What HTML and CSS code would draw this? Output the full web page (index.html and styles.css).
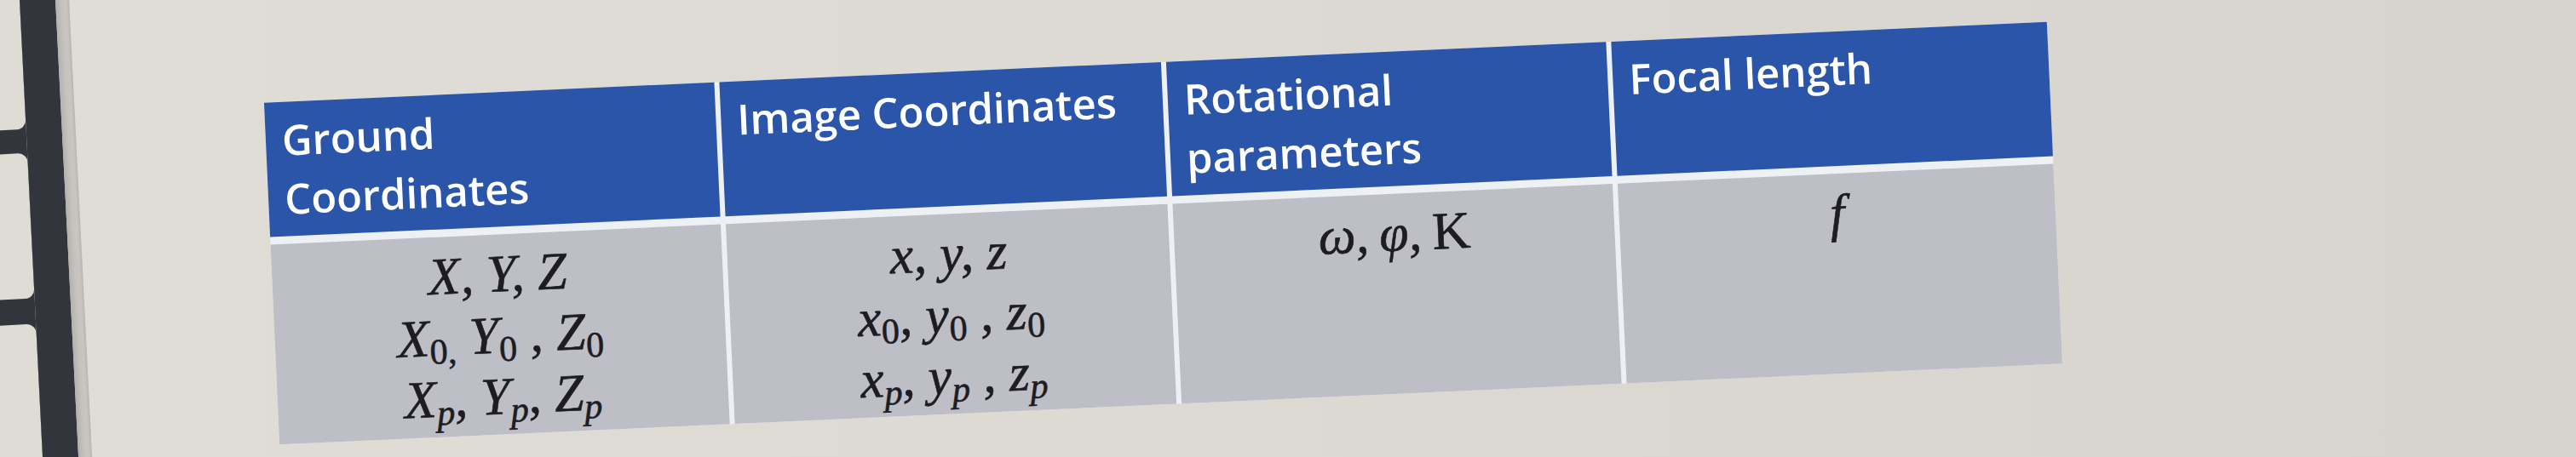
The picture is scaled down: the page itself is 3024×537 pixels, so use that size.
FILE: index.html
```html
<!DOCTYPE html>
<html lang="en">
<head>
<meta charset="utf-8">
<title>Photogrammetry parameters</title>
<link rel="stylesheet" href="styles.css">
</head>
<body>
  <div class="edge">
    <div class="bezel">
      <div class="bezel-panels">
        <div class="panel panel-top"></div>
        <div class="panel panel-mid"></div>
        <div class="panel panel-bottom"></div>
      </div>
      <div class="bezel-bar"></div>
      <div class="bezel-lip"></div>
    </div>
  </div>

  <div class="table">
    <div class="th">Ground<br>Coordinates</div>
    <div class="th">Image Coordinates</div>
    <div class="th">Rotational<br>parameters</div>
    <div class="th">Focal length</div>

    <div class="td">
      <div class="ln">X, Y, Z</div>
      <div class="ln">X<sub class="up">0,</sub> Y<sub class="up">0</sub> , Z<sub class="up">0</sub></div>
      <div class="ln">X<sub>p</sub>, Y<sub>p</sub>, Z<sub>p</sub></div>
    </div>
    <div class="td">
      <div class="ln">x, y, z</div>
      <div class="ln">x<sub class="up">0</sub>, y<sub class="up">0</sub> , z<sub class="up">0</sub></div>
      <div class="ln">x<sub>p</sub>, y<sub>p</sub> , z<sub>p</sub></div>
    </div>
    <div class="td">
      <div class="ln">ω,&thinsp;φ,&thinsp;<span class="up">K</span></div>
    </div>
    <div class="td">
      <div class="ln">f</div>
    </div>
  </div>
</body>
</html>
```

FILE: styles.css
```css
html, body {
  margin: 0;
  padding: 0;
}

body {
  width: 3024px;
  height: 537px;
  overflow: hidden;
  display: flex;
  align-items: flex-start;
  background: linear-gradient(90deg, #e0ddd7 0%, #dddad4 45%, #d7d4cf 100%);
  font-family: "Open Sans", "Liberation Sans", sans-serif;
}

/* monitor bezel at the left edge of the photo, clipped to the frame */
.edge {
  flex: none;
  width: 110px;
  height: 537px;
  overflow: hidden;
}

.bezel {
  display: flex;
  width: 118px;
  height: 640px;
  margin: -60px 0 0 -37px;
  transform-origin: 60px 60px;
  transform: rotate(-2.88deg);
}

.bezel-panels {
  width: 60px;
  display: flex;
  flex-direction: column;
  background: #33353c;
}

.panel {
  background: #dfdcd6;
  border-radius: 0 11px 11px 0;
}

.panel-top {
  height: 212px;
  margin-bottom: 28px;
}

.panel-mid {
  height: 171px;
  margin-bottom: 30px;
}

.panel-bottom {
  flex: 1;
}

.bezel-bar {
  width: 42px;
  background: #33353c;
}

.bezel-lip {
  width: 16px;
  background: linear-gradient(90deg, #b4b2ae 0%, #c6c3bf 45%, #c9c6c1 75%, #b9b6b1 100%);
}

/* the projected table */
.table {
  flex: none;
  width: 2095px;
  height: 402px;
  margin: 73px 0 0 207.5px;
  transform: rotate(-2.6deg);
  display: grid;
  grid-template-columns: 529px 519px 517px 512px;
  grid-template-rows: 158px 235px;
  column-gap: 6px;
  row-gap: 9px;
  background: #eef1f4;
}

.th {
  background: #2a55a8;
  color: #ffffff;
  font-weight: 600;
  font-size: 49px;
  line-height: 69px;
  padding: 10px 19px 0;
  white-space: nowrap;
}

.td {
  background: #bdbec6;
  color: #1c1c22;
  font-family: "Liberation Serif", "DejaVu Serif", serif;
  font-style: italic;
  font-size: 62px;
  line-height: 72px;
  padding-top: 10px;
  text-align: center;
  -webkit-text-stroke: 0.6px #1c1c22;
}

.ln {
  white-space: nowrap;
}

.td sub {
  font-size: 0.68em;
  line-height: 0;
  vertical-align: -0.23em;
}

.up {
  font-style: normal;
}
```
